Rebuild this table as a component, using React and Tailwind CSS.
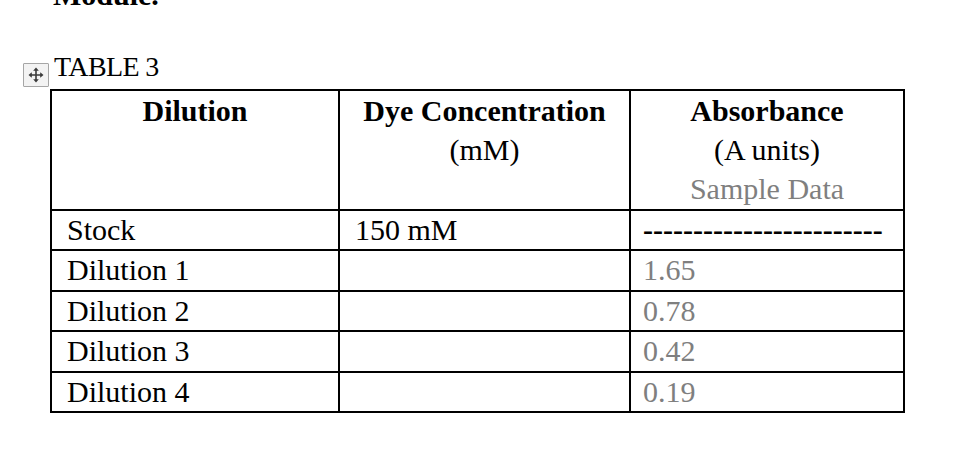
import React from "react";

function MoveHandle() {
  return (
    <div className="absolute left-[-27px] top-[16px] w-[26px] h-[24px] border border-[#a6a6a6] bg-[#f3f3f3] rounded-[1px] flex items-center justify-center">
      <svg width="16" height="16" viewBox="0 0 16 16">
        <path d="M8 3 V13 M3 8 H13" stroke="#3a3a3a" strokeWidth="1.6" />
        <path d="M8 0.5 L5.2 3.8 H10.8 Z" fill="#3a3a3a" />
        <path d="M8 15.5 L5.2 12.2 H10.8 Z" fill="#3a3a3a" />
        <path d="M0.5 8 L3.8 5.2 V10.8 Z" fill="#3a3a3a" />
        <path d="M15.5 8 L12.2 5.2 V10.8 Z" fill="#3a3a3a" />
      </svg>
    </div>
  );
}

const rows = [
  ["Stock", "150 mM", null],
  ["Dilution 1", "", "1.65"],
  ["Dilution 2", "", "0.78"],
  ["Dilution 3", "", "0.42"],
  ["Dilution 4", "", "0.19"],
];

export default function App() {
  return (
    <div className="w-[974px] h-[454px] overflow-hidden bg-white text-black font-['Liberation_Serif',serif] text-[30px]">
      <div className="pl-[50px]">
        <div className="mt-[-25px] leading-[40px] font-bold pl-[3px]">Module.</div>
        <div className="relative mt-[32px] leading-[40px] pl-[4px] text-[28px] tracking-[-0.6px]">
          <MoveHandle />
          TABLE 3
        </div>
        <table className="mt-[2px] w-[853px] table-fixed border-collapse border-2 border-black">
          <colgroup>
            <col className="w-[288px]" />
            <col className="w-[291px]" />
            <col className="w-[274px]" />
          </colgroup>
          <thead>
            <tr>
              <th className="border-2 border-black align-top text-center font-bold leading-[39px] p-0 h-[120px]">
                Dilution
              </th>
              <th className="border-2 border-black align-top text-center leading-[39px] p-0">
                <div className="font-bold">Dye Concentration</div>
                <div className="font-normal">(mM)</div>
              </th>
              <th className="border-2 border-black align-top text-center leading-[39px] p-0">
                <div className="font-bold">Absorbance</div>
                <div className="font-normal">(A units)</div>
                <div className="font-normal text-[#7f7f7f]">Sample Data</div>
              </th>
            </tr>
          </thead>
          <tbody>
            {rows.map((r, i) => (
              <tr key={i}>
                <td className="border-2 border-black leading-[38.4px] p-0 pl-[15px] whitespace-nowrap">{r[0]}</td>
                <td className="border-2 border-black leading-[38.4px] p-0 pl-[15px] whitespace-nowrap">{r[1]}</td>
                <td className="border-2 border-black leading-[38.4px] p-0 pl-[12px] whitespace-nowrap text-[#7f7f7f]">
                  {r[2] === null ? (
                    <span className="text-black font-bold">------------------------</span>
                  ) : (
                    r[2]
                  )}
                </td>
              </tr>
            ))}
          </tbody>
        </table>
      </div>
    </div>
  );
}
